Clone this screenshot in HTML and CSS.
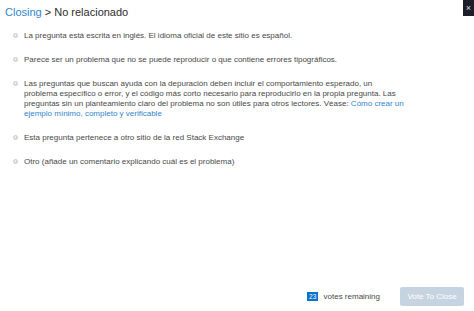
FILE: index.html
```html
<!DOCTYPE html>
<html lang="es">
<head>
    <meta charset="UTF-8">
    <title>Closing</title>
    <link rel="stylesheet" href="styles.css">
</head>
<body>

<div class="dialog">
    <div class="dialog-title">
        <a href="#" class="back-link">Closing</a> &gt; No relacionado
    </div>
    <a href="#" class="close-button">&times;</a>

    <ul class="options">
        <li class="option">
            <input type="radio" name="reason" class="radio">
            <label>La pregunta está escrita en inglés. El idioma oficial de este sitio es español.</label>
        </li>
        <li class="option">
            <input type="radio" name="reason" class="radio">
            <label>Parece ser un problema que no se puede reproducir o que contiene errores tipográficos.</label>
        </li>
        <li class="option">
            <input type="radio" name="reason" class="radio">
            <label>Las preguntas que buscan ayuda con la depuración deben incluir el comportamiento esperado, un problema específico o error, y el código más corto necesario para reproducirlo en la propia pregunta. Las preguntas sin un planteamiento claro del problema no son útiles para otros lectores. Véase: <a href="#">Cómo crear un ejemplo mínimo, completo y verificable</a></label>
        </li>
        <li class="option">
            <input type="radio" name="reason" class="radio">
            <label>Esta pregunta pertenece a otro sitio de la red Stack Exchange</label>
        </li>
        <li class="option">
            <input type="radio" name="reason" class="radio">
            <label>Otro (añade un comentario explicando cuál es el problema)</label>
        </li>
    </ul>

    <div class="dialog-footer">
        <span class="votes"><span class="badge">23</span> votes remaining</span>
        <button class="vote-button" disabled>Vote To Close</button>
    </div>
</div>

</body>
</html>
```

FILE: styles.css
```css
body {
    font-family: 'Liberation Sans', Arial, sans-serif;
    margin: 0;
    padding: 0;
    background-color: #fff;
    color: #444;
}

.dialog {
    position: relative;
    height: 311px;
    box-sizing: border-box;
    padding: 4px 10px 5px 5px;
    display: flex;
    flex-direction: column;
}

.dialog-title {
    font-size: 11px;
    line-height: 16px;
    color: #2d2d2d;
}

.back-link {
    color: #2f86c9;
    text-decoration: none;
}

.close-button {
    position: absolute;
    top: 0;
    right: 0;
    width: 11px;
    height: 16px;
    background-color: #1c1e2a;
    color: #ddd;
    font-size: 9px;
    line-height: 16px;
    text-align: center;
    text-decoration: none;
}

.options {
    list-style: none;
    margin: 11px 0 0 0;
    padding: 0 0 0 8px;
}

.option {
    display: flex;
    align-items: flex-start;
    font-size: 8px;
    line-height: 10px;
    margin-bottom: 14px;
}

.option label {
    max-width: 380px;
    color: #484848;
}

.option a {
    color: #2f86c9;
    text-decoration: none;
}

.radio {
    appearance: none;
    -webkit-appearance: none;
    width: 5px;
    height: 5px;
    margin: 2px 6px 0 0;
    border: 1px solid #c8c8c8;
    border-radius: 50%;
    background: radial-gradient(circle at 40% 35%, #f4f4f4, #cfcfcf);
    flex-shrink: 0;
}

.dialog-footer {
    margin-top: auto;
    display: flex;
    justify-content: flex-end;
    align-items: center;
    gap: 20px;
}

.votes {
    font-size: 8px;
    color: #484848;
}

.badge {
    display: inline-block;
    background-color: #0b72c9;
    color: #fff;
    font-size: 6.5px;
    padding: 1px 2px;
    margin-right: 3px;
}

.vote-button {
    font-family: inherit;
    font-size: 8px;
    color: #fff;
    background-color: #c5d4e0;
    border: none;
    border-radius: 2px;
    width: 64px;
    height: 19px;
}
```
